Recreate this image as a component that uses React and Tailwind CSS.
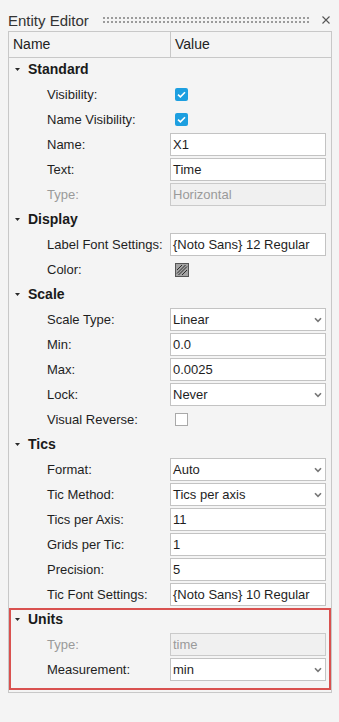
import React from "react";

const sections = [
  {
    title: "Standard",
    rows: [
      { label: "Visibility:", kind: "check", checked: true },
      { label: "Name Visibility:", kind: "check", checked: true },
      { label: "Name:", kind: "text", value: "X1" },
      { label: "Text:", kind: "text", value: "Time" },
      { label: "Type:", kind: "text", value: "Horizontal", disabled: true },
    ],
  },
  {
    title: "Display",
    rows: [
      { label: "Label Font Settings:", kind: "text", value: "{Noto Sans} 12 Regular" },
      { label: "Color:", kind: "color" },
    ],
  },
  {
    title: "Scale",
    rows: [
      { label: "Scale Type:", kind: "select", value: "Linear" },
      { label: "Min:", kind: "text", value: "0.0" },
      { label: "Max:", kind: "text", value: "0.0025" },
      { label: "Lock:", kind: "select", value: "Never" },
      { label: "Visual Reverse:", kind: "check", checked: false },
    ],
  },
  {
    title: "Tics",
    rows: [
      { label: "Format:", kind: "select", value: "Auto" },
      { label: "Tic Method:", kind: "select", value: "Tics per axis" },
      { label: "Tics per Axis:", kind: "text", value: "11" },
      { label: "Grids per Tic:", kind: "text", value: "1" },
      { label: "Precision:", kind: "text", value: "5" },
      { label: "Tic Font Settings:", kind: "text", value: "{Noto Sans} 10 Regular" },
    ],
  },
];

const units = {
  title: "Units",
  rows: [
    { label: "Type:", kind: "text", value: "time", disabled: true },
    { label: "Measurement:", kind: "select", value: "min" },
  ],
};

function Chevron() {
  return (
    <svg width="8" height="6" viewBox="0 0 8 6" className="absolute right-[3px] top-[8px]">
      <path d="M1 1.2 L4 4.4 L7 1.2" fill="none" stroke="#777" strokeWidth="1.6" />
    </svg>
  );
}

function Value({ row }) {
  if (row.kind === "check") {
    return row.checked ? (
      <div className="ml-[5px] w-[13px] h-[13px] rounded-[2px] bg-[#1d9fe0] flex items-center justify-center">
        <svg width="9" height="7" viewBox="0 0 9 7">
          <path d="M1 3.6 L3.4 5.8 L8 1.2" fill="none" stroke="#fff" strokeWidth="1.6" />
        </svg>
      </div>
    ) : (
      <div className="ml-[5px] w-[13px] h-[13px] bg-white border border-[#a9a9a9]" />
    );
  }
  if (row.kind === "color") {
    // hatched swatch
    return (
      <svg width="14" height="14" viewBox="0 0 14 14" className="ml-[5px]">
        <rect x="0.5" y="0.5" width="13" height="13" fill="#a3a3a3" stroke="#555" />
        <path d="M2 7 L7 2 M2 10.5 L10.5 2 M3.5 12 L12 3.5 M7 12 L12 7" stroke="#2a2a2a" strokeWidth="1" />
      </svg>
    );
  }
  return (
    <div
      className={`relative w-[156px] h-[23px] border flex items-center pl-[2px] text-[13px] ${
        row.disabled
          ? "bg-[#f0f0f0] border-[#cacaca] text-[#9a9a9a]"
          : "bg-white border-[#c3c3c3] text-[#1e1e1e]"
      }`}
    >
      <span className="whitespace-nowrap">{row.value}</span>
      {row.kind === "select" && <Chevron />}
    </div>
  );
}

function Section({ section }) {
  return (
    <>
      <div className="h-[23px] mb-[2px] flex items-center">
        <svg width="5" height="3" viewBox="0 0 5 3" className="ml-[6px]">
          <polygon points="0,0 5,0 2.5,3" fill="#2a2a2a" />
        </svg>
        <span className="ml-[8px] text-[14px] font-bold text-[#1a1a1a]">{section.title}</span>
      </div>
      {section.rows.map((row) => (
        <div key={section.title + row.label} className="h-[23px] mb-[2px] flex items-center">
          <div
            className={`w-[161px] pl-[38px] text-[13px] whitespace-nowrap ${
              row.disabled ? "text-[#9a9a9a]" : "text-[#1e1e1e]"
            }`}
          >
            {row.label}
          </div>
          <Value row={row} />
        </div>
      ))}
    </>
  );
}

export default function App() {
  return (
    <div className="w-[339px] h-[722px] overflow-hidden bg-[#f4f4f4] font-['Liberation_Sans',Arial,sans-serif]">
      {/* title bar */}
      <div className="h-[31px] pt-[11px] pl-[8px] flex items-start">
        <div className="h-[18px] flex items-center w-full">
          <span className="text-[15px] text-[#333] leading-none">Entity Editor</span>
          <div className="ml-[13px] h-[8px] w-[208px] bg-[radial-gradient(circle,#9c9c9c_0.9px,transparent_1.1px)] bg-[length:4px_4px]" />
          <svg width="8" height="8" viewBox="0 0 8 8" className="ml-[12px]">
            <path d="M0.5 0.5 L7.5 7.5 M7.5 0.5 L0.5 7.5" stroke="#555" strokeWidth="1.1" />
          </svg>
        </div>
      </div>

      {/* property table */}
      <div className="ml-[8px] w-[324px] border border-[#c8c8c8] bg-[#f4f4f4]">
        <div className="h-[26px] flex border-b border-[#c8c8c8] text-[14px] text-[#222]">
          <div className="w-[162px] pl-[4px] flex items-center border-r border-[#c8c8c8]">Name</div>
          <div className="pl-[4px] flex items-center">Value</div>
        </div>
        {sections.map((s) => (
          <Section key={s.title} section={s} />
        ))}
        <div className="pb-[7px] mb-[2px] outline-2 outline-[#d9514f] -outline-offset-2">
          <Section section={units} />
        </div>
      </div>
    </div>
  );
}
